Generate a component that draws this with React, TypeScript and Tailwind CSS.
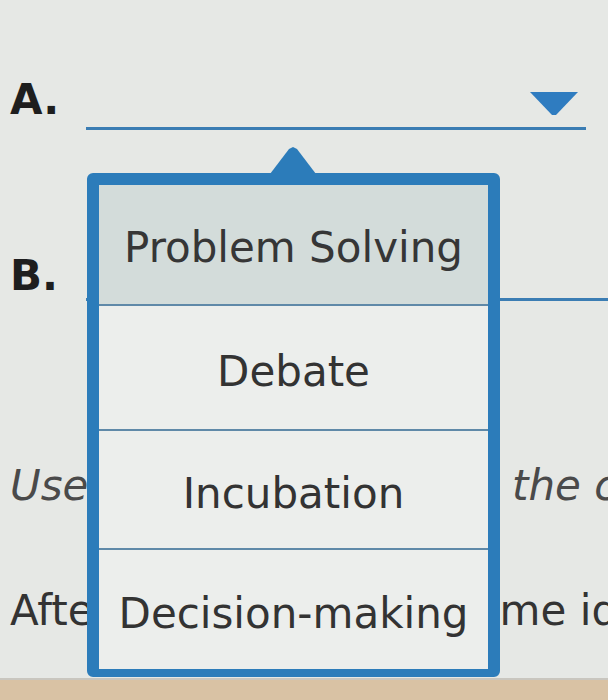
import React from "react"

const options = [
  { label: "Problem Solving", h: "h-[119px]" },
  { label: "Debate", h: "h-[125px]" },
  { label: "Incubation", h: "h-[119px]" },
  { label: "Decision-making", h: "h-[121px]" },
]

function DropdownMenu() {
  return (
    <div className="absolute left-[87px] top-[147px] z-10 flex w-[413px] flex-col">
      {/* caret pointing at the select above */}
      <div className="h-[26px] pl-[183px]">
        <svg width="46" height="27" viewBox="0 0 46 27" className="block">
          <polygon points="0,27 19,2 23,0 27,2 46,27" fill="#2c7cba" />
        </svg>
      </div>
      <ul className="overflow-hidden rounded-[6px] border-[12px] border-b-[8px] border-[#2c7cba] bg-[#eceeec]">
        {options.map((opt, i) => (
          <li
            key={opt.label}
            className={
              i === 0
                ? `flex ${opt.h} items-center justify-center bg-[#d3dcda] pt-[6px] text-[42px] leading-none text-[#363636]`
                : `flex ${opt.h} items-center justify-center border-t-2 border-[#5f89a8] pt-[8px] text-[42px] leading-none text-[#333333]`
            }
          >
            {opt.label}
          </li>
        ))}
      </ul>
    </div>
  )
}

export default function App() {
  return (
    <div className="relative flex h-[700px] w-[608px] flex-col overflow-hidden bg-[#e6e8e5] font-['DejaVu_Sans',sans-serif]">
      {/* Question A */}
      <div className="flex pt-[79px]">
        <span className="w-[86px] pl-[10px] text-[42px] font-bold leading-none text-[#1e1e1e]">A.</span>
        <div className="flex h-[51px] w-[500px] justify-end border-b-[3px] border-[#3b7db3] pr-[8px] pt-[13px]">
          <svg width="48" height="23" viewBox="0 0 48 23">
            <polygon points="0,0 48,0 26,23 22,23" fill="#2f7cc0" />
          </svg>
        </div>
      </div>

      {/* Question B */}
      <div className="mt-[124px] flex">
        <span className="w-[86px] pl-[10px] pt-[1px] text-[42px] font-bold leading-none text-[#1e1e1e]">B.</span>
        <div className="h-[47px] flex-1 border-b-[3px] border-[#3b7db3]" />
      </div>

      {/* Instructions behind the open menu */}
      <p className="mt-[164px] flex whitespace-nowrap pl-[10px] text-[42px] italic leading-none text-[#4a4a4a]">
        <span className="w-[502px] shrink-0">Use</span>
        <span>the c</span>
      </p>
      <p className="mt-[83px] flex whitespace-nowrap pl-[10px] text-[42px] leading-none text-[#333333]">
        <span className="w-[442px] shrink-0">After</span>
        <span>same id</span>
      </p>

      {/* desk edge at the bottom of the photo */}
      <div className="mt-auto h-[22px] border-t-2 border-[#c9c6bf] bg-[#d9c2a4]" />

      <DropdownMenu />
    </div>
  )
}
